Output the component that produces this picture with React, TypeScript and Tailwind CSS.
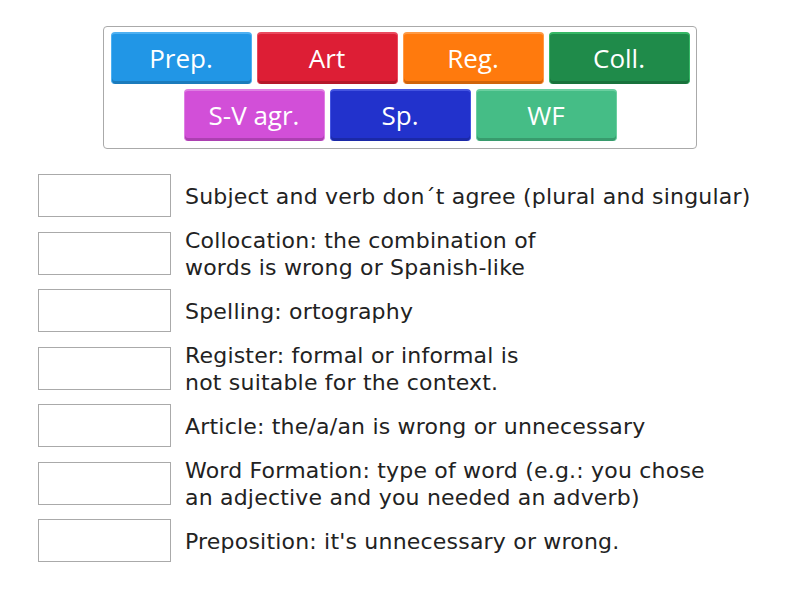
import React from "react";

type Tile = { label: string; bg: string };

const row1: Tile[] = [
  { label: "Prep.", bg: "bg-[#2196e6] border-[#4db0f2]" },
  { label: "Art", bg: "bg-[#dd1e35] border-[#ea4a5e]" },
  { label: "Reg.", bg: "bg-[#ff7a0d] border-[#ff9a44]" },
  { label: "Coll.", bg: "bg-[#1f8b4a] border-[#35b765]" },
];

const row2: Tile[] = [
  { label: "S-V agr.", bg: "bg-[#d24fd8] border-[#df7fe3]" },
  { label: "Sp.", bg: "bg-[#2232cc] border-[#4354e0]" },
  { label: "WF", bg: "bg-[#45bd86] border-[#6acf9f]" },
];

const items: string[][] = [
  ["Subject and verb don´t agree (plural and singular)"],
  ["Collocation: the combination of", "words is wrong or Spanish-like"],
  ["Spelling: ortography"],
  ["Register: formal or informal is", "not suitable for the context."],
  ["Article: the/a/an is wrong or unnecessary"],
  ["Word Formation: type of word (e.g.: you chose", "an adjective and you needed an adverb)"],
  ["Preposition: it's unnecessary or wrong."],
];

const TileBtn = ({ t }: { t: Tile }) => (
  <div
    className={`flex h-[52px] w-[141px] items-center justify-center rounded-[4px] border-x border-t-2 pb-[2px] font-['Open_Sans',sans-serif] text-[26px] font-medium text-white shadow-[inset_0_-3px_0_rgba(0,0,0,0.18)] ${t.bg}`}
  >
    {t.label}
  </div>
);

export default function App() {
  return (
    <div className="min-h-[600px] w-[800px] bg-white font-['DejaVu_Sans',sans-serif] text-[#222]">
      <div className="pt-[26px]">
        <div className="mx-auto flex w-[594px] flex-col items-center gap-[5px] rounded-[4px] border border-[#aaa] px-[7px] pb-[7px] pt-[5px]">
          <div className="flex gap-[5px]">
            {row1.map((t) => (
              <TileBtn key={t.label} t={t} />
            ))}
          </div>
          <div className="flex gap-[5px]">
            {row2.map((t) => (
              <TileBtn key={t.label} t={t} />
            ))}
          </div>
        </div>
      </div>

      <div className="mt-[25px] flex flex-col gap-[14.5px] pl-[38px]">
        {items.map((lines, i) => (
          <div key={i} className="flex h-[43px] items-center gap-[14px]">
            <div className="h-[43px] w-[133px] shrink-0 border border-[#aaa] bg-white" />
            <p className="whitespace-nowrap pt-[1px] text-[22px] leading-[27px] tracking-[0.2px]">
              {lines.map((l, j) => (
                <React.Fragment key={j}>
                  {j > 0 && <br />}
                  {l}
                </React.Fragment>
              ))}
            </p>
          </div>
        ))}
      </div>
    </div>
  );
}
